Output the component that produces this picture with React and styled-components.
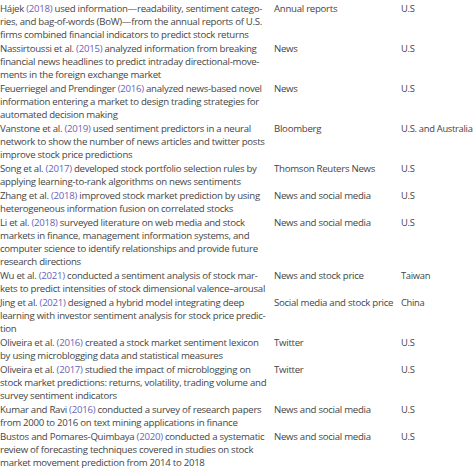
import React from "react";
import styled, { createGlobalStyle } from "styled-components";

const Global = createGlobalStyle`
  html, body { margin: 0; padding: 0; background: #fff; }
  body { font-family: "Open Sans", "Noto Sans", sans-serif; }
`;

const Table = styled.div`
  display: flex;
  flex-direction: column;
  gap: 1px;
  padding-top: 2px;
  width: 474px;
  overflow: hidden;
  color: #454545;
  font-size: 9.65px;
  line-height: 13px;
  letter-spacing: -0.27px;
`;

const Row = styled.div`
  display: grid;
  grid-template-columns: 274px 127px 1fr;
`;

const Desc = styled.div`
  white-space: nowrap;
`;

const Line = styled.div`
  white-space: nowrap;
`;

const Cell = styled.div`
  white-space: nowrap;
`;

const Country = styled.div`
  white-space: nowrap;
  font-size: 9.4px;
  letter-spacing: -0.3px;
`;

const Year = styled.span`
  color: #6a63b8;
`;

const rows = [
  [["Hájek (2018) used information—readability, sentiment catego-", "ries, and bag-of-words (BoW)—from the annual reports of U.S.", "firms combined financial indicators to predict stock returns"], "Annual reports", "U.S"],
  [["Nassirtoussi et al. (2015) analyzed information from breaking", "financial news headlines to predict intraday directional-move-", "ments in the foreign exchange market"], "News", "U.S"],
  [["Feuerriegel and Prendinger (2016) analyzed news-based novel", "information entering a market to design trading strategies for", "automated decision making"], "News", "U.S"],
  [["Vanstone et al. (2019) used sentiment predictors in a neural", "network to show the number of news articles and twitter posts", "improve stock price predictions"], "Bloomberg", "U.S. and Australia"],
  [["Song et al. (2017) developed stock portfolio selection rules by", "applying learning-to-rank algorithms on news sentiments"], "Thomson Reuters News", "U.S"],
  [["Zhang et al. (2018) improved stock market prediction by using", "heterogeneous information fusion on correlated stocks"], "News and social media", "U.S"],
  [["Li et al. (2018) surveyed literature on web media and stock", "markets in finance, management information systems, and", "computer science to identify relationships and provide future", "research directions"], "News and social media", "U.S"],
  [["Wu et al. (2021) conducted a sentiment analysis of stock mar-", "kets to predict intensities of stock dimensional valence–arousal"], "News and stock price", "Taiwan"],
  [["Jing et al. (2021) designed a hybrid model integrating deep", "learning with investor sentiment analysis for stock price predic-", "tion"], "Social media and stock price", "China"],
  [["Oliveira et al. (2016) created a stock market sentiment lexicon", "by using microblogging data and statistical measures"], "Twitter", "U.S"],
  [["Oliveira et al. (2017) studied the impact of microblogging on", "stock market predictions: returns, volatility, trading volume and", "survey sentiment indicators"], "Twitter", "U.S"],
  [["Kumar and Ravi (2016) conducted a survey of research papers", "from 2000 to 2016 on text mining applications in finance"], "News and social media", "U.S"],
  [["Bustos and Pomares-Quimbaya (2020) conducted a systematic", "review of forecasting techniques covered in studies on stock", "market movement prediction from 2014 to 2018"], "News and social media", "U.S"],
];

function renderLine(text) {
  const m = text.match(/^(.*?)\((\d{4})\)(.*)$/);
  if (!m) return text;
  return (
    <>
      {m[1]}
      <Year>({m[2]})</Year>
      {m[3]}
    </>
  );
}

export default function App() {
  return (
    <>
      <Global />
      <Table>
        {rows.map(([lines, source, country], i) => (
          <Row key={i}>
            <Desc>
              {lines.map((l, j) => (
                <Line key={j}>{j === 0 ? renderLine(l) : l}</Line>
              ))}
            </Desc>
            <Cell>{source}</Cell>
            <Country>{country}</Country>
          </Row>
        ))}
      </Table>
    </>
  );
}
